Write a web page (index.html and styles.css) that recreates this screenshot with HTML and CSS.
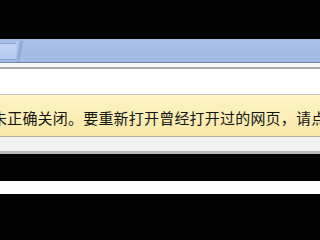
FILE: index.html
```html
<!DOCTYPE html>
<html>

<head>
  <title>Chrome</title>

  <link rel="stylesheet" href="styles.css">
</head>

<body>

  <div class = "top-black"></div>

  <div class = "tab-strip">
    <div class = "tab"></div>
    <div class = "tab-edge"></div>
  </div>

  <div class = "toolbar"></div>

  <div class = "page-top"></div>

  <div class = "infobar">
    <span class = "infobar-text">未正确关闭。要重新打开曾经打开过的网页，请点</span>
  </div>

  <div class = "gray-band"></div>

  <div class = "black-band"></div>
  <div class = "white-band"></div>
  <div class = "bottom-black"></div>

</body>

</html>
```

FILE: styles.css
```css
html, body {
  margin: 0;
  padding: 0;
  width: 320px;
  height: 240px;
  overflow: hidden;
  background-color: black;
}

.top-black {
  height: 39px;
  background-color: #020202;
}

.tab-strip {
  height: 23px;
  display: flex;
  align-items: flex-end;
  background: linear-gradient(#a9c0e8, #a2bae4);
  border-bottom: 1px solid #75869f;
}

.tab {
  width: 16px;
  height: 17px;
  margin-bottom: 2px;
  background: linear-gradient(#c4d6f4, #b2c8ee);
  border-top: 1px solid #8aa4cf;
  border-bottom: 1px solid #8aa4cf;
  box-sizing: border-box;
}

.tab-edge {
  width: 7px;
  height: 21px;
  background: linear-gradient(100deg, #b8cbee 20%, #8ea6cf 50%, #a7bde6 80%);
}

.toolbar {
  height: 4px;
  background-color: #f7f7f7;
  border-bottom: 2px solid #a9a9a9;
}

.page-top {
  height: 25px;
  background-color: #ffffff;
  border-bottom: 1px solid #c9c9c9;
}

.infobar {
  height: 41px;
  display: flex;
  align-items: center;
  overflow: hidden;
  white-space: nowrap;
  background: linear-gradient(#fdf3c4, #f9e9a8);
  border-bottom: 1px solid #b9b093;
}

.infobar-text {
  flex-shrink: 0;
  margin-left: -8px;
  padding-top: 3px;
  font-family: "Noto Sans CJK SC", sans-serif;
  font-size: 15px;
  letter-spacing: 0.2px;
  color: #141414;
}

.gray-band {
  height: 14px;
  background-color: #f2f2f2;
  border-bottom: 3px solid #b9b9b9;
}

.black-band {
  height: 27px;
  background-color: #020202;
}

.white-band {
  height: 13px;
  background-color: #ffffff;
}

.bottom-black {
  height: 46px;
  background-color: #020202;
}
```
